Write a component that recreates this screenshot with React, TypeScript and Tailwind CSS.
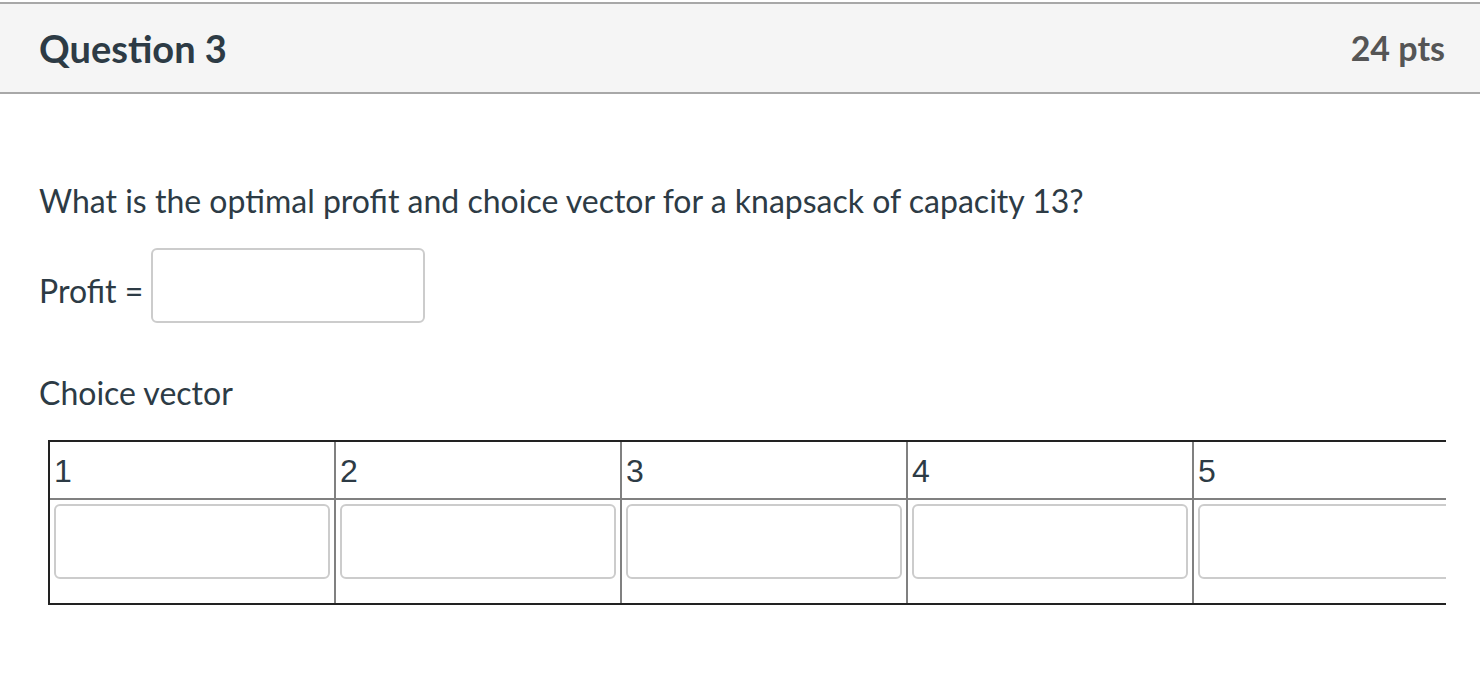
import React from "react";

const cols = ["1", "2", "3", "4", "5"];

export default function App() {
  return (
    <div className="w-[1480px] h-[684px] bg-white overflow-hidden" style={{ fontFamily: "Lato, 'Liberation Sans', sans-serif" }}>
      <div className="mt-[2px] h-[92px] bg-[#f5f5f5] border-t-2 border-b-2 border-[#a8a8a8] flex items-center justify-between pl-[39px] pr-[35px]">
        <h2 className="text-[38px] font-bold text-[#2d3b45] leading-none">Question 3</h2>
        <div className="text-[34px] font-bold text-[#555555] leading-none">24 pts</div>
      </div>
      <div className="pl-[39px]">
        <p className="mt-[87px] text-[32px] leading-[40px] text-[#2d3b45]">
          What is the optimal profit and choice vector for a knapsack of capacity 13?
        </p>
        <div className="mt-[27px] flex items-start text-[32px] leading-[40px] text-[#2d3b45]">
          <span className="mt-[23px]">Profit =</span>
          <div className="ml-[8px] w-[274px] h-[75px] border-2 border-[#cccccc] rounded-[6px] bg-white"></div>
        </div>
        <p className="mt-[50px] text-[32px] leading-[40px] text-[#2d3b45]">Choice vector</p>
      </div>
      <div className="ml-[48px] mt-[27px] w-[1398px] overflow-hidden">
        <div className="w-[1432px] border-t-2 border-b-2 border-l-2 border-[#222222]">
          <div className="flex border-b-2 border-[#808080]">
            {cols.map((c) => (
              <div
                key={c}
                className="w-[286px] h-[56px] shrink-0 border-r-2 border-[#808080] pl-[4px] pt-[12px] text-[32px] leading-[34px] text-[#2d3b45]"
                style={{ fontFamily: "'Liberation Sans', Arial, sans-serif" }}
              >
                {c}
              </div>
            ))}
          </div>
          <div className="flex">
            {cols.map((c) => (
              <div key={c} className="w-[286px] h-[103px] shrink-0 border-r-2 border-[#808080] pl-[4px] pr-[4px] pt-[4px]">
                <div className="w-[276px] h-[75px] border-2 border-[#cccccc] rounded-[6px] bg-white"></div>
              </div>
            ))}
          </div>
        </div>
      </div>
    </div>
  );
}
